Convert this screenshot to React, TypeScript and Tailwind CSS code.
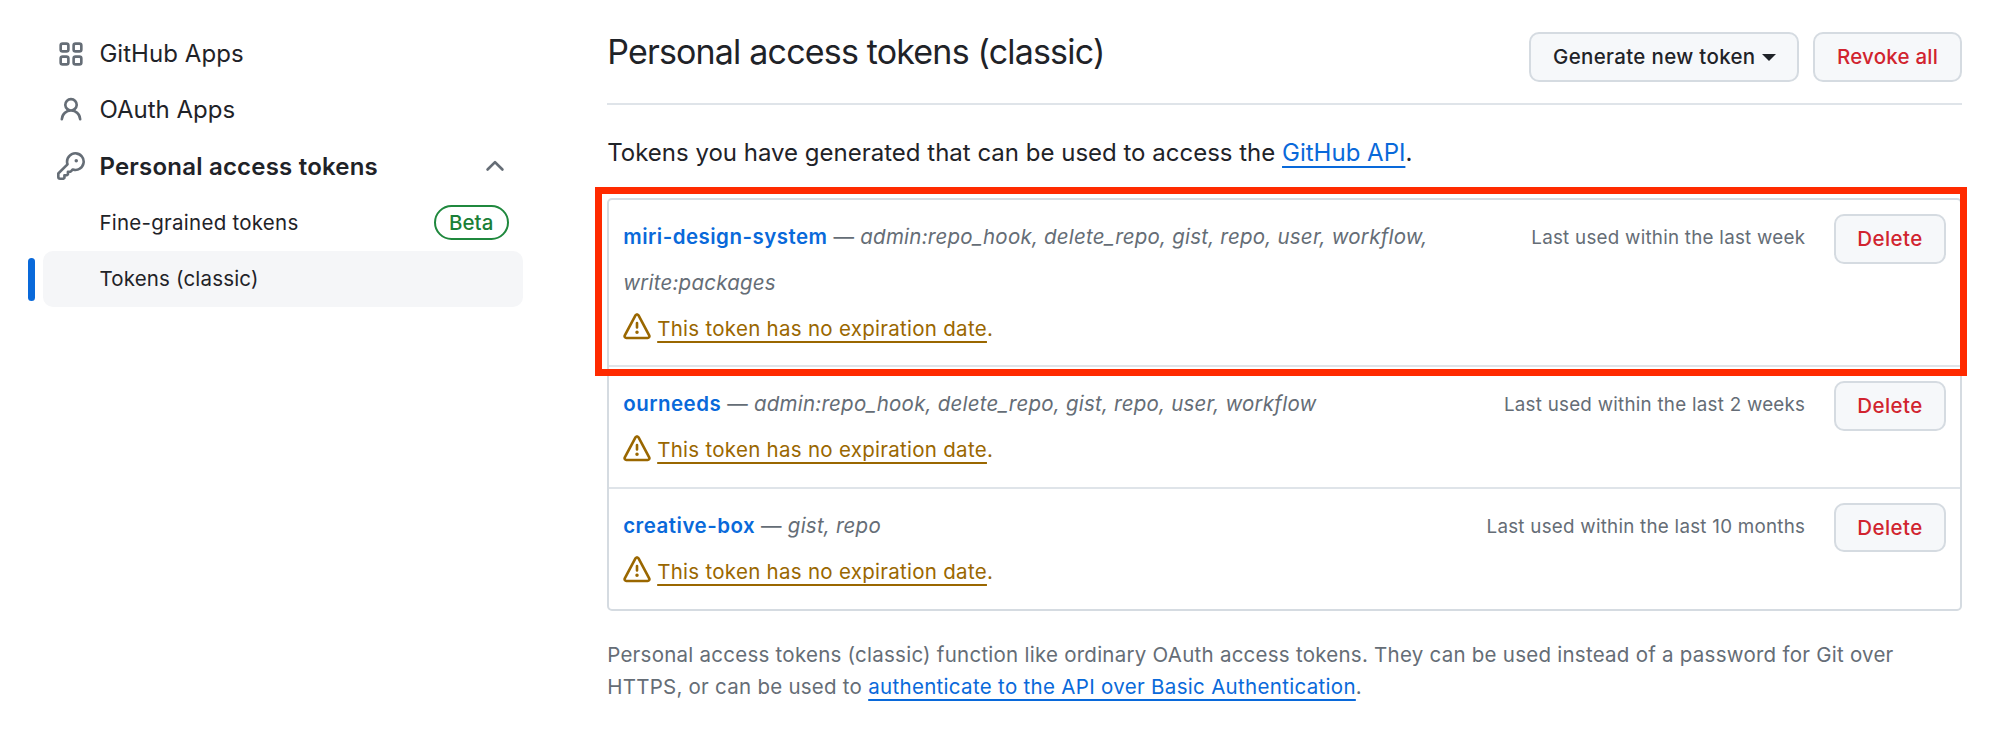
import React from "react";

type IconProps = { d: string; className?: string };

const Icon = ({ d, className = "" }: IconProps) => (
  <svg viewBox="0 0 16 16" fill="currentColor" className={`size-7 shrink-0 ${className}`}>
    <path fillRule="evenodd" d={d} />
  </svg>
);

const icons = {
  person:
    "M10.561 8.073a6.005 6.005 0 0 1 3.432 5.142.75.75 0 1 1-1.498.07 4.5 4.5 0 0 0-8.99 0 .75.75 0 0 1-1.498-.07 6.004 6.004 0 0 1 3.431-5.142 3.999 3.999 0 1 1 5.123 0ZM10.5 5a2.5 2.5 0 1 0-5 0 2.5 2.5 0 0 0 5 0Z",
  key: "M10.5 0a5.499 5.499 0 1 1-1.288 10.848l-.932.932a.749.749 0 0 1-.53.22H7v.75a.749.749 0 0 1-.22.53l-.5.5a.749.749 0 0 1-.53.22H5v.75a.749.749 0 0 1-.22.53l-.5.5a.749.749 0 0 1-.53.22h-2A1.75 1.75 0 0 1 0 14.25v-2c0-.199.079-.389.22-.53l4.932-4.932A5.5 5.5 0 0 1 10.5 0Zm-4 5.5c-.001.431.069.86.205 1.269a.75.75 0 0 1-.181.768L1.5 12.56v1.69c0 .138.112.25.25.25h1.69l.06-.06v-1.19a.75.75 0 0 1 .75-.75h1.19l.06-.06v-1.19a.75.75 0 0 1 .75-.75h1.19l1.023-1.025a.75.75 0 0 1 .768-.18A4 4 0 1 0 6.5 5.5ZM11 6a1 1 0 1 1 0-2 1 1 0 0 1 0 2Z",
  chevronUp:
    "M3.22 10.53a.749.749 0 0 1 0-1.06l4.25-4.25a.749.749 0 0 1 1.06 0l4.25 4.25a.749.749 0 1 1-1.06 1.06L8 6.811 4.28 10.53a.749.749 0 0 1-1.06 0Z",
  alert:
    "M6.457 1.047c.659-1.234 2.427-1.234 3.086 0l6.082 11.378A1.75 1.75 0 0 1 14.082 15H1.918a1.75 1.75 0 0 1-1.543-2.575Zm1.763.707a.25.25 0 0 0-.44 0L1.698 13.132a.25.25 0 0 0 .22.368h12.164a.25.25 0 0 0 .22-.368Zm.53 3.996v2.5a.75.75 0 0 1-1.5 0v-2.5a.75.75 0 0 1 1.5 0ZM9 11a1 1 0 1 1-2 0 1 1 0 0 1 2 0Z",
};

const AppsIcon = () => (
  <svg viewBox="0 0 16 16" fill="none" stroke="currentColor" strokeWidth="1.5" className="size-7 shrink-0">
    <rect x="2.1" y="2.1" width="4.4" height="4.4" rx="1.1" />
    <rect x="9.5" y="2.1" width="4.4" height="4.4" rx="1.1" />
    <rect x="2.1" y="9.5" width="4.4" height="4.4" rx="1.1" />
    <rect x="9.5" y="9.5" width="4.4" height="4.4" rx="1.1" />
  </svg>
);

const tokens = [
  {
    name: "miri-design-system",
    scopes: "admin:repo_hook, delete_repo, gist, repo, user, workflow, write:packages",
    lastUsed: "Last used within the last week",
  },
  {
    name: "ourneeds",
    scopes: "admin:repo_hook, delete_repo, gist, repo, user, workflow",
    lastUsed: "Last used within the last 2 weeks",
  },
  {
    name: "creative-box",
    scopes: "gist, repo",
    lastUsed: "Last used within the last 10 months",
  },
];

const button =
  "flex h-[49.5px] shrink-0 items-center justify-center rounded-[10px] border-2 border-[#d5dbe1] bg-[#f6f8fa] text-[20.5px] font-medium";

const navItem = "flex h-[56.3px] items-center rounded-[10px] px-3.5";

const Sidebar = () => (
  <nav className="mt-[25.5px] ml-[43.4px] w-[479.3px] shrink-0 text-2xl text-[#1f2328]">
    <div className={`${navItem} gap-3.5`}>
      <span className="text-[#656d76]">
        <AppsIcon />
      </span>
      <span className="pt-px tracking-[0.05px]">GitHub Apps</span>
    </div>
    <div className={`${navItem} gap-3.5`}>
      <Icon d={icons.person} className="text-[#656d76]" />
      <span className="pt-px">OAuth Apps</span>
    </div>
    <div className={`${navItem} gap-3.5`}>
      <Icon d={icons.key} className="text-[#656d76]" />
      <span className="flex-1 pt-px font-semibold tracking-[0.21px]">Personal access tokens</span>
      <Icon d={icons.chevronUp} className="text-[#656d76]" />
    </div>
    <div className={`${navItem} justify-between pl-14 text-[20.5px] tracking-[0.26px]`}>
      Fine-grained tokens
      <span className="flex h-[35px] w-[75px] items-center justify-center rounded-full border-2 border-[#1f883d] font-medium tracking-normal text-[#1a7f37]">
        Beta
      </span>
    </div>
    <div className={`${navItem} relative bg-[#f5f6f8] pl-14 text-[20.5px] tracking-[0.18px]`}>
      <span className="absolute top-[7px] -left-[15px] h-[43px] w-[7px] rounded-[4px] bg-[#0969da]" />
      Tokens (classic)
    </div>
  </nav>
);

const TokenRow = ({ name, scopes, lastUsed }: (typeof tokens)[number]) => (
  <li className="flex items-start border-b-2 border-[#dfe4e9] p-3.5 text-[20.5px] leading-[45.8px] last:border-b-0">
    <div className="w-[830px]">
      <p className="tracking-[0.23px] text-[#656d76]">
        <a className="font-semibold tracking-[0.48px] text-[#0969da]">{name}</a> —{" "}
        <em>{scopes}</em>
      </p>
      <p className="flex items-center tracking-[0.28px] text-[#9a6700]">
        <Icon d={icons.alert} className="mr-1.5 mb-[3px]" />
        <a className="underline decoration-2 underline-offset-[5px] [text-decoration-skip-ink:none]">
          This token has no expiration date
        </a>
        .
      </p>
    </div>
    <span className="ml-auto pt-px text-[18.8px] tracking-[0.25px] text-[#656d76]">{lastUsed}</span>
    <button className={`${button} ml-[29px] w-[111.5px] tracking-[0.44px] text-[#d1242f]`}>
      Delete
    </button>
  </li>
);

export default function App() {
  return (
    <div className="flex h-[755px] w-[2000px] overflow-hidden bg-white font-['Inter',sans-serif] text-[#1f2328]">
      <Sidebar />

      <main className="ml-[84.5px] w-[1354.6px]">
        <header className="flex h-[105px] items-start border-b-2 border-[#dfe4e9] pt-[32.4px]">
          <h2 className="pt-px text-[34px] leading-[38px] tracking-[-0.82px]">
            Personal access tokens (classic)
          </h2>
          <button className={`${button} ml-auto w-[270px] gap-1.5 tracking-[0.33px]`}>
            Generate new token
            <span className="border-x-[7px] border-t-[7px] border-x-transparent border-t-current" />
          </button>
          <button className={`${button} ml-3.5 w-[148.5px] tracking-[0.22px] text-[#d1242f]`}>
            Revoke all
          </button>
        </header>

        <p className="mt-[30px] mb-[27px] text-2xl leading-9">
          Tokens you have generated that can be used to access the{" "}
          <a className="text-[#0969da] underline decoration-2 underline-offset-[5px]">GitHub API</a>.
        </p>

        <div className="relative">
          <ul className="rounded-[5px] border-2 border-[#d5dbe1]">
            {tokens.map((token) => (
              <TokenRow key={token.name} {...token} />
            ))}
          </ul>
          {/* Highlight around the first token */}
          <div className="absolute -top-[11px] -right-[5px] -left-[12px] h-[189px] border-[7px] border-[#ff2a00]" />
        </div>

        <p className="mt-7 text-[20.5px] leading-8 tracking-[0.25px] text-[#656d76]">
          Personal access tokens (classic) function like ordinary OAuth access tokens. They can be
          used instead of a password for Git over HTTPS, or can be used to{" "}
          <a className="tracking-[0.31px] text-[#0969da] underline decoration-2 underline-offset-[5px]">
            authenticate to the API over Basic Authentication
          </a>
          .
        </p>
      </main>
    </div>
  );
}
